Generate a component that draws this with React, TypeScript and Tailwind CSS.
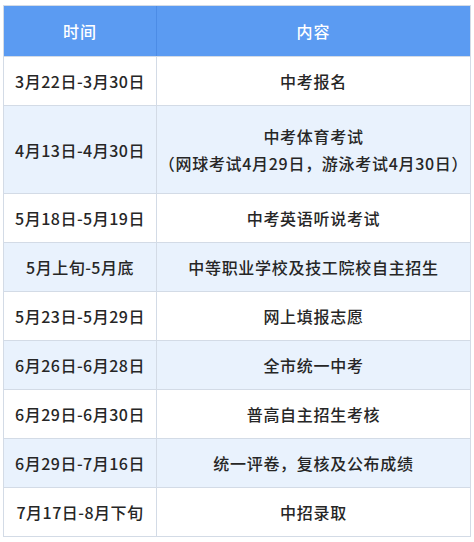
import React from "react";

const rows: { time: string; content: string[] }[] = [
  { time: "3月22日-3月30日", content: ["中考报名"] },
  { time: "4月13日-4月30日", content: ["中考体育考试", "（网球考试4月29日，游泳考试4月30日）"] },
  { time: "5月18日-5月19日", content: ["中考英语听说考试"] },
  { time: "5月上旬-5月底", content: ["中等职业学校及技工院校自主招生"] },
  { time: "5月23日-5月29日", content: ["网上填报志愿"] },
  { time: "6月26日-6月28日", content: ["全市统一中考"] },
  { time: "6月29日-6月30日", content: ["普高自主招生考核"] },
  { time: "6月29日-7月16日", content: ["统一评卷，复核及公布成绩"] },
  { time: "7月17日-8月下旬", content: ["中招录取"] },
];

export default function App() {
  return (
    <div
      className="min-h-[542px] w-[474px] bg-white pt-[5px] pl-[3px]"
      style={{ fontFamily: '"Noto Sans CJK SC", "Noto Sans", sans-serif' }}
    >
      <div className="w-[468px] border border-[#d3dbe6] text-[16px] font-medium text-[#262626]">
        <div className="grid h-[50px] grid-cols-[153px_1fr] bg-[#5b9bf2] text-white">
          <div className="flex items-center justify-center border-r border-[#4c8ce6] tracking-[1px]">时间</div>
          <div className="flex items-center justify-center tracking-[1px]">内容</div>
        </div>
        {rows.map((r, i) => (
          <div
            key={r.time}
            className={
              "grid grid-cols-[153px_1fr] border-t border-[#d3dbe6] " +
              (r.content.length > 1 ? "h-[88px] " : "h-[49px] ") +
              (i % 2 === 1 ? "bg-[#e9f2fd]" : "bg-white")
            }
          >
            <div className="flex items-center justify-center border-r border-[#d3dbe6] tracking-[0.5px]">
              {r.time}
            </div>
            <div className="flex flex-col items-center justify-center leading-[27px] tracking-[0.7px]">
              {r.content.map((c) => (
                <span key={c}>{c}</span>
              ))}
            </div>
          </div>
        ))}
      </div>
    </div>
  );
}
